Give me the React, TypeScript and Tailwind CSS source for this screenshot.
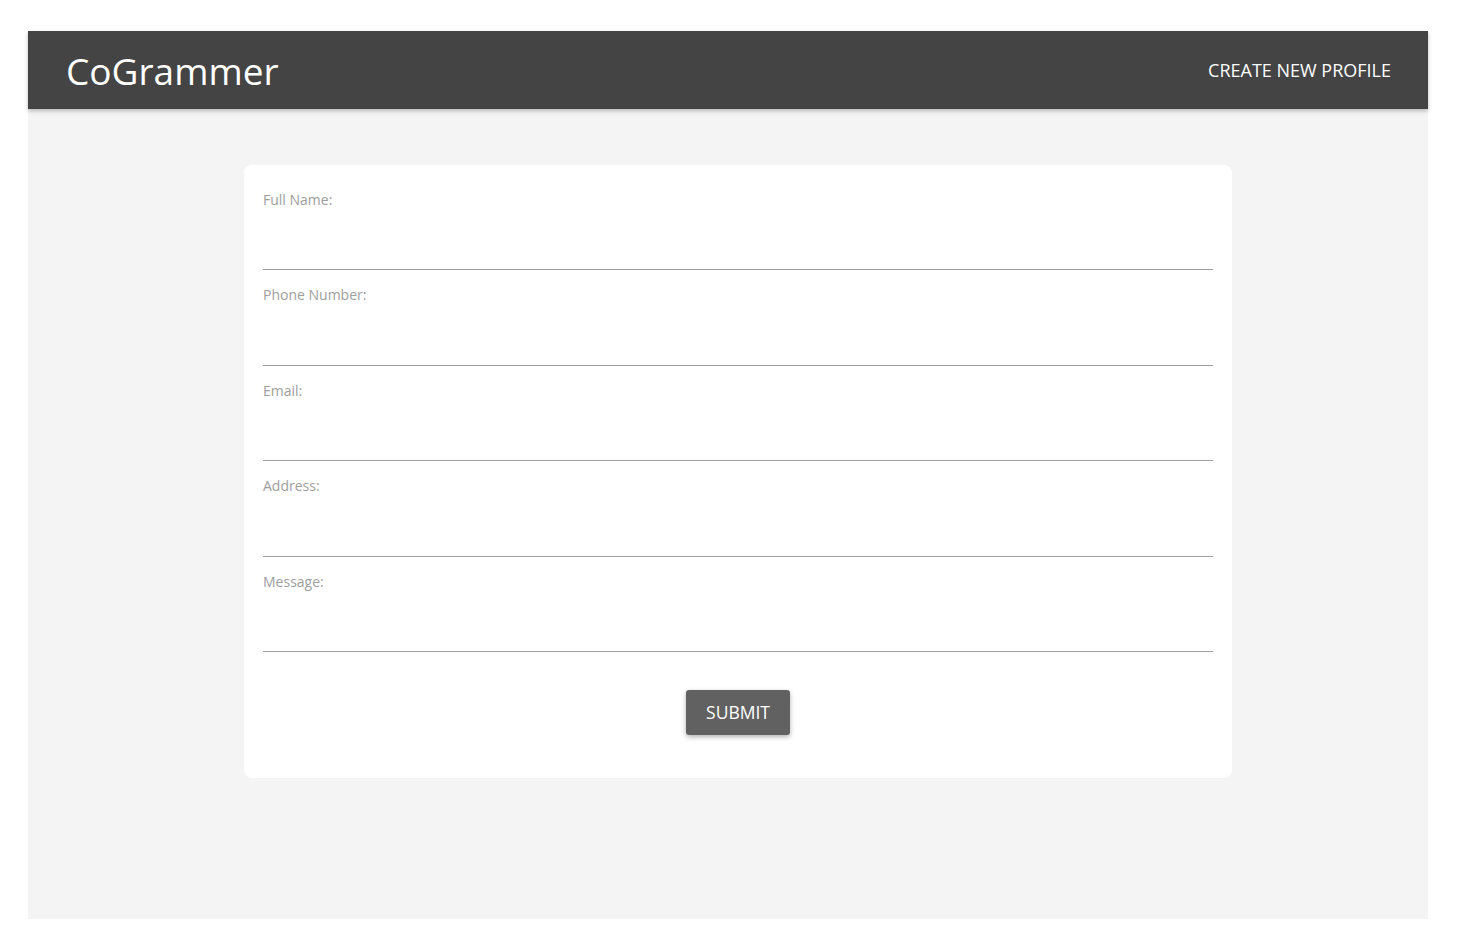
const fields = ["Full Name:", "Phone Number:", "Email:", "Address:", "Message:"];

export default function App() {
  return (
    <div className="min-h-screen bg-white pt-[31px] pl-[28px] font-['Open_Sans','Noto_Sans',sans-serif]">
      <div className="w-[1400px] h-[888px] bg-[#f4f4f4]">
        <header className="relative z-10 h-[78px] bg-[#444444] flex items-center justify-between pl-[38px] pr-[37px] shadow-[0_2px_4px_rgba(0,0,0,0.25)]">
          <h1 className="text-[37px] text-white leading-none">CoGrammer</h1>
          <a className="text-[18px] text-white uppercase cursor-pointer">Create New Profile</a>
        </header>

        <form
          onSubmit={(e) => e.preventDefault()}
          className="mt-[56px] ml-[216px] w-[988px] rounded-lg bg-white px-[19px] pt-[9.5px] pb-[43px]"
        >
          {fields.map((label) => (
            <div key={label} className="pt-4">
              <label className="block h-5 text-sm leading-[18px] text-[#9e9e9e]">{label}</label>
              <input
                type="text"
                className="block w-full h-[59.5px] border-b border-[#9e9e9e] outline-none text-base text-gray-800 bg-transparent"
              />
            </div>
          ))}

          <div className="flex justify-center mt-[38px]">
            <button
              type="submit"
              className="w-[104px] h-[45px] rounded-[3px] bg-[#616161] text-white text-[17.5px] uppercase shadow-[0_2px_5px_rgba(0,0,0,0.3)]"
            >
              Submit
            </button>
          </div>
        </form>
      </div>
    </div>
  );
}
